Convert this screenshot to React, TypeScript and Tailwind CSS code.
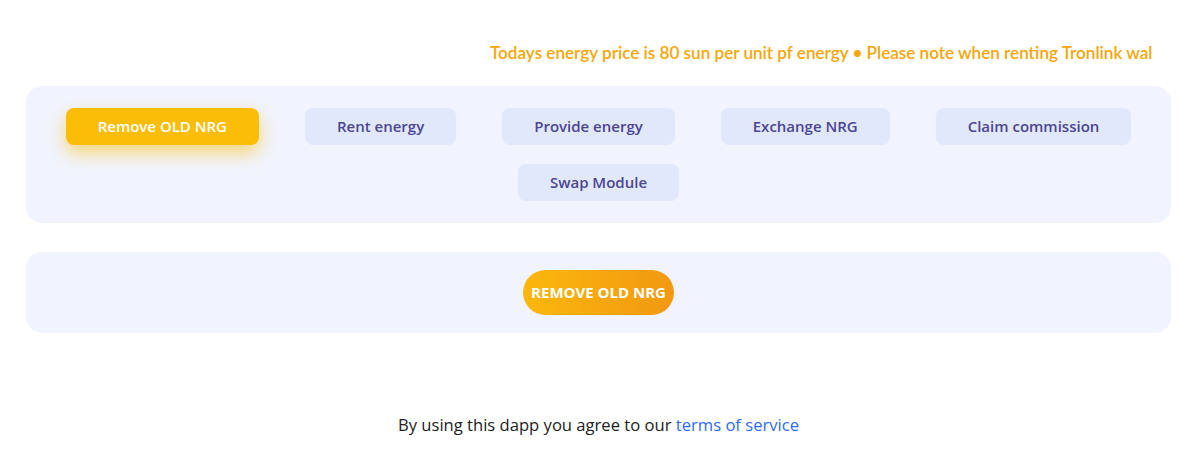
const tabs = [
  "Remove OLD NRG",
  "Rent energy",
  "Provide energy",
  "Exchange NRG",
  "Claim commission",
  "Swap Module",
];

export default function App() {
  const active = "Remove OLD NRG";

  return (
    <div className="min-h-[456px] w-full bg-white font-['Open_Sans',sans-serif]">
      <div className="pl-[26px] pr-[29px] pt-[41px]">
        {/* marquee strip, mid-scroll */}
        <div className="mr-[16px] h-[24px] overflow-hidden">
          <div className="whitespace-nowrap pl-[464px] font-['Lato',sans-serif] text-[17.1px] font-semibold leading-[24px] text-[#f6a609]">
            Todays energy price is 80 sun per unit pf energy • Please note when renting Tronlink wal
            <span className="pl-[14px]">let energy</span>
          </div>
        </div>

        <div className="mt-[21px] rounded-[16px] bg-[#f1f4fe] py-[22px]">
          <div className="flex flex-wrap justify-center gap-y-[19px]">
            {tabs.map((t) => (
              <button
                key={t}
                className={
                  t === active
                    ? "mx-[23px] h-[37px] rounded-[8px] bg-[#fcbd08] px-8 text-[15px] font-semibold text-white shadow-[0_8px_18px_rgba(252,189,8,0.55)]"
                    : "mx-[23px] h-[37px] rounded-[8px] bg-[#e2e8fc] px-8 text-[15px] font-semibold text-[#4b4592]"
                }
              >
                {t}
              </button>
            ))}
          </div>
        </div>

        <div className="mt-[29px] flex h-[81px] items-center justify-center rounded-[16px] bg-[#f1f4fe]">
          <button className="h-[45px] rounded-full bg-gradient-to-r from-[#fbb70b] to-[#f29812] px-2 text-[15px] font-bold text-white">
            REMOVE OLD NRG
          </button>
        </div>

        <p className="mt-[80px] text-center text-[16.6px] text-[#222222]">
          By using this dapp you agree to our{" "}
          <a href="#" className="text-[#2f6cf5]">
            terms of service
          </a>
        </p>
      </div>
    </div>
  );
}
